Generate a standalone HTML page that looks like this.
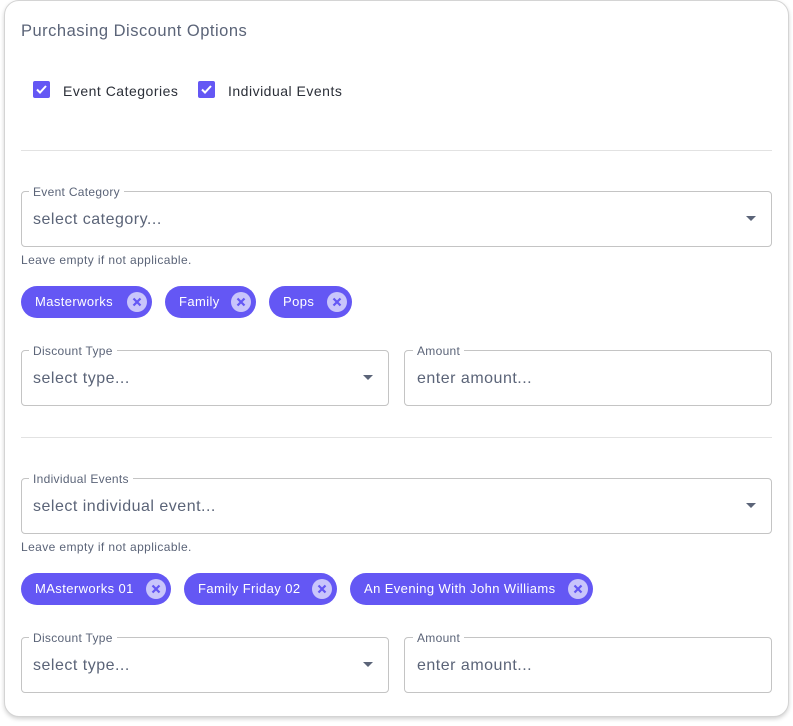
<!DOCTYPE html>
<html><head><style>
*{box-sizing:border-box;margin:0;padding:0}
body{width:793px;height:726px;background:#fff;font-family:"Liberation Sans",sans-serif;position:relative;overflow:hidden}
.card{position:absolute;left:4px;top:0;width:785px;height:717px;border:1px solid #d4d4d4;border-radius:15px;box-shadow:0 2px 4px rgba(0,0,0,.18);background:#fff}
.a{position:absolute}
.title{left:21px;top:22px;font-size:16.5px;color:#5b6478;letter-spacing:0.5px}
.cb{width:17px;height:17px;background:#6457f4;border-radius:2px}
.cb svg{display:block}
.lbl{font-size:14px;color:#2b2f38;letter-spacing:0.5px}
.hr{left:21px;width:751px;height:1px;background:#e2e2e2}
.f{border:1px solid #c4c4c4;border-radius:4px}
.leg{font-size:12px;color:#5b6478;background:#fff;padding:0 4px;line-height:14px;letter-spacing:0.3px}
.ph{font-size:16px;color:#5b6478;letter-spacing:0.5px}
.tri{width:0;height:0;border-left:5px solid transparent;border-right:5px solid transparent;border-top:5px solid #5b6478}
.help{font-size:12px;color:#5b6478;left:21px;letter-spacing:0.4px}
.chip{height:32px;border-radius:16px;background:#6457f4;color:#fff;font-size:13px;line-height:32px;padding-left:14px;letter-spacing:0.4px}
.x{position:absolute;right:5px;top:6px;width:20px;height:20px;border-radius:50%;background:#c9c5fb}
</style></head><body>
<div class="card"></div>
<div class="a title">Purchasing Discount Options</div>
<div class="a cb" style="left:33px;top:81px"><svg width="17" height="17"><path d="M4 8.5l3 3 6-6.5" stroke="#fff" stroke-width="2" fill="none"/></svg></div>
<div class="a lbl" style="left:63px;top:83px">Event Categories</div>
<div class="a cb" style="left:198px;top:81px"><svg width="17" height="17"><path d="M4 8.5l3 3 6-6.5" stroke="#fff" stroke-width="2" fill="none"/></svg></div>
<div class="a lbl" style="left:228px;top:83px">Individual Events</div>
<div class="a hr" style="top:150px"></div>

<div class="a f" style="left:21px;top:191px;width:751px;height:56px"></div>
<div class="a leg" style="left:29px;top:185px">Event Category</div>
<div class="a ph" style="left:33px;top:211px">select category...</div>
<div class="a tri" style="left:746px;top:216px"></div>
<div class="a help" style="top:253px">Leave empty if not applicable.</div>

<div class="a chip" style="left:21px;top:286px;width:131px">Masterworks<div class="x"><svg width="20" height="20"><path d="M6.5 6.5l7 7M13.5 6.5l-7 7" stroke="#6457f4" stroke-width="2.2"/></svg></div></div>
<div class="a chip" style="left:165px;top:286px;width:91px">Family<div class="x"><svg width="20" height="20"><path d="M6.5 6.5l7 7M13.5 6.5l-7 7" stroke="#6457f4" stroke-width="2.2"/></svg></div></div>
<div class="a chip" style="left:269px;top:286px;width:83px">Pops<div class="x"><svg width="20" height="20"><path d="M6.5 6.5l7 7M13.5 6.5l-7 7" stroke="#6457f4" stroke-width="2.2"/></svg></div></div>

<div class="a f" style="left:21px;top:350px;width:368px;height:56px"></div>
<div class="a leg" style="left:29px;top:344px">Discount Type</div>
<div class="a ph" style="left:33px;top:370px">select type...</div>
<div class="a tri" style="left:363px;top:375px"></div>
<div class="a f" style="left:404px;top:350px;width:368px;height:56px"></div>
<div class="a leg" style="left:413px;top:344px">Amount</div>
<div class="a ph" style="left:417px;top:370px">enter amount...</div>

<div class="a hr" style="top:437px"></div>

<div class="a f" style="left:21px;top:478px;width:751px;height:56px"></div>
<div class="a leg" style="left:29px;top:472px">Individual Events</div>
<div class="a ph" style="left:33px;top:498px">select individual event...</div>
<div class="a tri" style="left:746px;top:503px"></div>
<div class="a help" style="top:540px">Leave empty if not applicable.</div>

<div class="a chip" style="left:21px;top:573px;width:150px">MAsterworks 01<div class="x"><svg width="20" height="20"><path d="M6.5 6.5l7 7M13.5 6.5l-7 7" stroke="#6457f4" stroke-width="2.2"/></svg></div></div>
<div class="a chip" style="left:184px;top:573px;width:153px">Family Friday 02<div class="x"><svg width="20" height="20"><path d="M6.5 6.5l7 7M13.5 6.5l-7 7" stroke="#6457f4" stroke-width="2.2"/></svg></div></div>
<div class="a chip" style="left:350px;top:573px;width:243px">An Evening With John Williams<div class="x"><svg width="20" height="20"><path d="M6.5 6.5l7 7M13.5 6.5l-7 7" stroke="#6457f4" stroke-width="2.2"/></svg></div></div>

<div class="a f" style="left:21px;top:637px;width:368px;height:56px"></div>
<div class="a leg" style="left:29px;top:631px">Discount Type</div>
<div class="a ph" style="left:33px;top:657px">select type...</div>
<div class="a tri" style="left:363px;top:662px"></div>
<div class="a f" style="left:404px;top:637px;width:368px;height:56px"></div>
<div class="a leg" style="left:413px;top:631px">Amount</div>
<div class="a ph" style="left:417px;top:657px">enter amount...</div>
</body></html>
